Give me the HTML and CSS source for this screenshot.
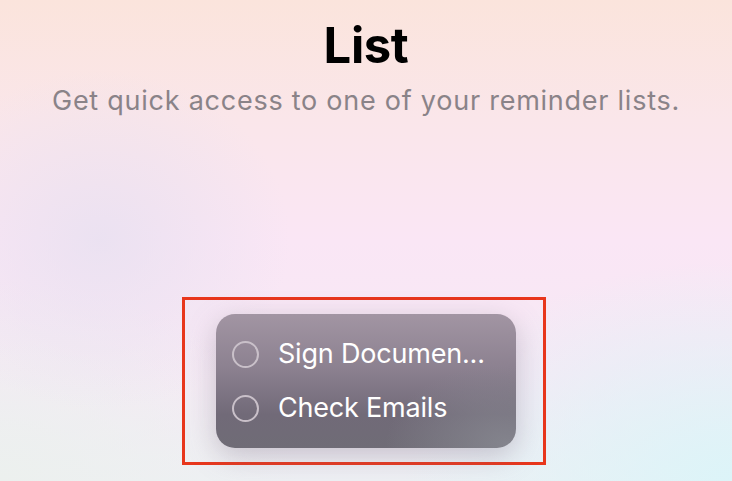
FILE: index.html
```html
<!DOCTYPE html>
<html>
<head>
<meta charset="utf-8">
<link rel="stylesheet" href="styles.css">
</head>
<body>
<main class="screen">
  <h1 class="title">List</h1>
  <p class="subtitle">Get quick access to one of your reminder lists.</p>
  <div class="spacer"></div>
  <div class="highlight">
    <div class="widget">
      <div class="row">
        <span class="check"></span>
        <span class="label">Sign Documen...</span>
      </div>
      <div class="row">
        <span class="check"></span>
        <span class="label">Check Emails</span>
      </div>
    </div>
  </div>
</main>
</body>
</html>
```
FILE: styles.css
```css
html, body {
  margin: 0;
  padding: 0;
}
body {
  width: 732px;
  height: 481px;
  overflow: hidden;
  font-family: "Inter", "Roboto", "Liberation Sans", sans-serif;
}
.screen {
  width: 732px;
  height: 481px;
  box-sizing: border-box;
  display: flex;
  flex-direction: column;
  align-items: center;
  padding-bottom: 16px;
  background:
    radial-gradient(ellipse 190px 170px at 100px 240px, rgba(230, 224, 240, 0.75), rgba(230, 224, 240, 0) 100%),
    radial-gradient(ellipse 330px 220px at 732px 481px, rgba(220, 244, 248, 1), rgba(220, 244, 248, 0) 100%),
    radial-gradient(ellipse 300px 200px at 0px 481px, rgba(236, 240, 238, 1), rgba(236, 240, 238, 0) 100%),
    linear-gradient(180deg, #fbe4dc 0%, #fae6ea 25%, #fae6f5 50%, #f6e9f5 78%, #eef0f4 100%);
}
.title {
  margin: 20px 0 0 0;
  font-size: 49px;
  line-height: 52px;
  font-weight: 700;
  color: #000;
  letter-spacing: -0.4px;
}
.subtitle {
  margin: 13px 0 0 0;
  font-size: 27px;
  line-height: 32px;
  color: #8a8388;
  font-weight: 400;
  letter-spacing: 0.75px;
  white-space: nowrap;
}
.spacer {
  flex: 1;
}
.highlight {
  border: 3px solid #e8361c;
  width: 358px;
  height: 162px;
  box-sizing: content-box;
  display: flex;
  align-items: center;
  justify-content: center;
  margin-left: -4px;
}
.widget {
  width: 300px;
  height: 134px;
  box-sizing: border-box;
  margin-left: 4px;
  border-radius: 19px;
  padding: 13px 16px;
  background:
    radial-gradient(ellipse 120px 80px at 290px 130px, rgba(140, 142, 150, 0.7), rgba(140, 142, 150, 0)),
    linear-gradient(180deg, #a295a3 0%, #8c8190 40%, #716a78 75%, #6f6c76 100%);
  box-shadow: 0 8px 28px rgba(120, 110, 130, 0.35);
}
.row {
  height: 54px;
  display: flex;
  align-items: center;
  gap: 19px;
}
.check {
  width: 23px;
  height: 23px;
  border: 2px solid #c9c0c9;
  border-radius: 50%;
  flex: none;
}
.label {
  color: #ffffff;
  font-size: 27px;
  line-height: 32px;
  letter-spacing: -0.2px;
}
```
